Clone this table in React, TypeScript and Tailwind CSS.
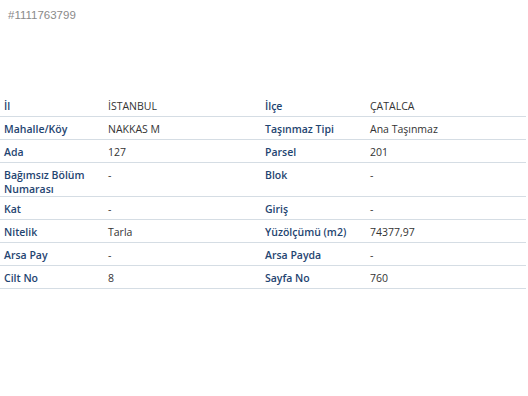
import React from 'react';

const rows: [string, string, string, string][] = [
  ['İl', 'İSTANBUL', 'İlçe', 'ÇATALCA'],
  ['Mahalle/Köy', 'NAKKAS M', 'Taşınmaz Tipi', 'Ana Taşınmaz'],
  ['Ada', '127', 'Parsel', '201'],
  ['Bağımsız Bölüm Numarası', '-', 'Blok', '-'],
  ['Kat', '-', 'Giriş', '-'],
  ['Nitelik', 'Tarla', 'Yüzölçümü (m2)', '74377,97'],
  ['Arsa Pay', '-', 'Arsa Payda', '-'],
  ['Cilt No', '8', 'Sayfa No', '760'],
];

const App: React.FC = () => {
  return (
    <div className="w-[528px] h-[396px] bg-white overflow-hidden">
      <div className="pl-[8px] pt-[8px] text-[11.5px] leading-[14px] text-[#8a8a8a] font-['Liberation_Sans',Arial,sans-serif]">
        #1111763799
      </div>

      <div className="mt-[72px] w-[526px] font-['Open_Sans',sans-serif] text-[10.5px] leading-[13.5px]">
        {rows.map((r, i) => (
          <div key={i} className="flex min-h-[23px] border-b border-[#d5dde4]">
            <div className="w-[108px] pl-[4px] pt-[6px] pr-[10px] font-semibold text-[#1f4571]">{r[0]}</div>
            <div className="w-[153px] pt-[6px] text-[#333]">{r[1]}</div>
            <div className="w-[109px] pl-[4px] pt-[6px] font-semibold text-[#1f4571]">{r[2]}</div>
            <div className="flex-1 pt-[6px] text-[#333]">{r[3]}</div>
          </div>
        ))}
      </div>
    </div>
  );
};

export default App;
